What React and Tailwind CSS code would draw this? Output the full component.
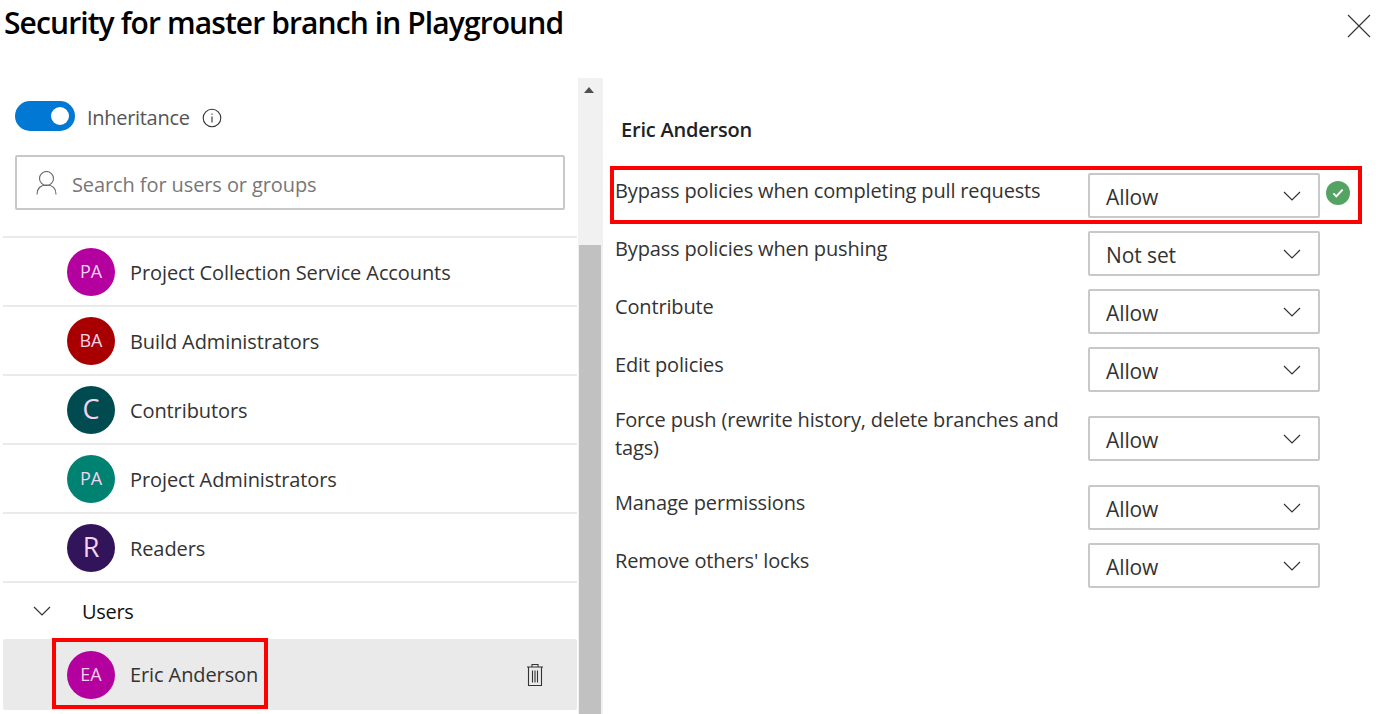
import React from "react";

const font = "font-['Open_Sans',_'Noto_Sans',sans-serif]";

const groups = [
  { initials: "PA", name: "Project Collection Service Accounts", color: "bg-[#b4009e]", small: true },
  { initials: "BA", name: "Build Administrators", color: "bg-[#a80000]", small: true },
  { initials: "C", name: "Contributors", color: "bg-[#004b50]" },
  { initials: "PA", name: "Project Administrators", color: "bg-[#008272]", small: true },
  { initials: "R", name: "Readers", color: "bg-[#32145a]" },
];

const permissions = [
  { label: "Bypass policies when completing pull requests", value: "Allow", saved: true },
  { label: "Bypass policies when pushing", value: "Not set" },
  { label: "Contribute", value: "Allow" },
  { label: "Edit policies", value: "Allow" },
  { label: "Force push (rewrite history, delete branches and tags)", value: "Allow", tall: true },
  { label: "Manage permissions", value: "Allow" },
  { label: "Remove others' locks", value: "Allow" },
];

const Chevron = ({ className }) => (
  <svg viewBox="0 0 18 10" className={className} fill="none" stroke="currentColor" strokeWidth="1.2">
    <path d="M1 1l8 8 8-8" />
  </svg>
);

const Avatar = ({ initials, color, small }) => (
  <div className={`flex h-12 w-12 shrink-0 items-center justify-center rounded-full text-[#f3d3ee] ${color} ${small ? "text-[18px]" : "text-[27px]"}`}>
    {initials}
  </div>
);

const GroupRow = ({ initials, name, color, small }) => (
  <div className="flex h-[69px] items-center border-b-2 border-[#eaeaea] pl-[64px]">
    <Avatar initials={initials} color={color} small={small} />
    <span className="ml-[15px] pt-[2px] text-[20px] tracking-[-0.1px] text-[#333]">{name}</span>
  </div>
);

const PermissionRow = ({ label, value, saved, tall }) => (
  <div className={`flex items-start ${tall ? "h-[80px]" : "h-[58px]"}`}>
    <div className={`w-[473px] text-[20px] leading-[28px] tracking-[-0.15px] text-[#333] ${tall ? "pt-[1px]" : "pt-[4px]"}`}>{label}</div>
    <div className={`relative flex h-[45px] w-[232px] shrink-0 items-center justify-between rounded-[2px] border-2 border-[#c8c8c8] pl-4 pr-[17px] ${tall ? "mt-[11px]" : ""}`}>
      <span className="pt-[4px] text-[21px] tracking-[-0.1px] text-[#333]">{value}</span>
      <Chevron className="h-[10px] w-[18px] text-[#333]" />
      {saved && (
        <div className="absolute left-[236px] top-[6px] flex h-6 w-6 items-center justify-center rounded-full bg-[#55a362]">
          <svg viewBox="0 0 14 12" className="h-[10px] w-3" fill="none" stroke="#fff" strokeWidth="2.4">
            <path d="M1.5 6.5l3.5 3.5 7.5-8" />
          </svg>
        </div>
      )}
    </div>
  </div>
);

export default function App() {
  return (
    <div className={`relative h-[714px] w-[1382px] overflow-hidden bg-white ${font}`}>
      {/* Header */}
      <div className="flex h-[78px] items-start justify-between pl-[4px] pr-[11px]">
        <h1 className="pt-[2px] text-[30px] font-semibold leading-[42px] tracking-[-0.9px] text-black">
          Security for master branch in Playground
        </h1>
        <svg viewBox="0 0 24 24" className="mt-[14px] h-6 w-6 text-[#333]" fill="none" stroke="currentColor" strokeWidth="1.1">
          <path d="M1 1l22 22M23 1L1 23" />
        </svg>
      </div>

      <div className="flex">
        {/* Left panel */}
        <div className="w-[578px] pl-[3px] pr-[1px]">
          <div className="pl-3 pr-[12px]">
            <div className="flex h-[55px] items-end pb-[2px]">
              <div className="flex h-[30px] w-[60px] items-center justify-end rounded-full bg-[#0078d4] pr-[6px]">
                <div className="h-[18px] w-[18px] rounded-full bg-white" />
              </div>
              <span className="mb-[-1px] ml-[12px] text-[20px] leading-[28px] tracking-[-0.3px] text-[#555]">Inheritance</span>
              <svg viewBox="0 0 20 20" className="mb-[3px] ml-[12px] h-[20px] w-[20px] text-[#333]" fill="none" stroke="currentColor" strokeWidth="1.1">
                <circle cx="10" cy="10" r="8.800" />
                <path d="M10 8.500v6M10 5.500v1.300" />
              </svg>
            </div>
            <div className="mt-[22px] flex h-[55px] w-[550px] items-center rounded-[2px] border-2 border-[#c8c8c8] pl-[19px]">
              <svg viewBox="0 0 21 24" className="h-6 w-[21px] text-[#666]" fill="none" stroke="currentColor" strokeWidth="1.1">
                <circle cx="10.500" cy="7.500" r="7" />
                <path d="M1 23.500c0-6 3.500-9.500 9.500-9.500s9.500 3.500 9.500 9.500" />
              </svg>
              <span className="ml-[15px] pt-[4px] text-[20px] tracking-[-0.1px] text-[#777]">Search for users or groups</span>
            </div>
          </div>
          <div className="mt-[26px] border-t-2 border-[#eaeaea]">
            {groups.map((g, i) => (
              <GroupRow key={i} {...g} />
            ))}
          </div>
          <div className="flex h-[56px] items-center pl-[30px]">
            <Chevron className="h-[10px] w-[18px] text-[#333]" />
            <span className="ml-[31px] pt-[2px] text-[20px] tracking-[-0.3px] text-[#111]">Users</span>
          </div>
          <div className="flex h-[71px] items-center justify-between rounded-[2px] bg-[#eaeaea] pl-[64px] pr-[32px]">
            <div className="flex items-center">
              <Avatar initials="EA" color="bg-[#b4009e]" small />
              <span className="ml-[15px] text-[20px] tracking-[-0.1px] text-[#333]">Eric Anderson</span>
            </div>
            <svg viewBox="0 0 18 24" className="h-6 w-5 text-[#333]" fill="none" stroke="currentColor" strokeWidth="1.1">
              <path d="M1 4h16M6 4V1.500h6V4M2.500 4v18.500h13V4M6.500 7.500v12M9 7.500v12M11.500 7.500v12" />
            </svg>
          </div>
        </div>

        {/* Scrollbar */}
        <div className="flex h-[636px] w-[25px] flex-col items-start bg-[#f1f1f1] pl-[1px]">
          <div className="ml-[5px] mt-[9px] h-0 w-0 border-x-[5px] border-b-[6px] border-x-transparent border-b-[#505050]" />
          <div className="mt-[152px] h-[469px] w-[22px] bg-[#c1c1c1]" />
        </div>

        {/* Right panel */}
        <div className="pl-[12px]">
          <div className="h-[95px] pl-[6px] pt-[37px] text-[20px] font-semibold leading-[30px] tracking-[-0.2px] text-[#222]">Eric Anderson</div>
          {permissions.map((p) => (
            <PermissionRow key={p.label} {...p} />
          ))}
        </div>
      </div>

      {/* Red callouts */}
      <div className="absolute left-[610px] top-[166px] h-[58px] w-[752px] border-4 border-[#ff0000]" />
      <div className="absolute left-[52px] top-[638px] h-[71px] w-[216px] border-4 border-[#ff0000]" />
    </div>
  );
}
